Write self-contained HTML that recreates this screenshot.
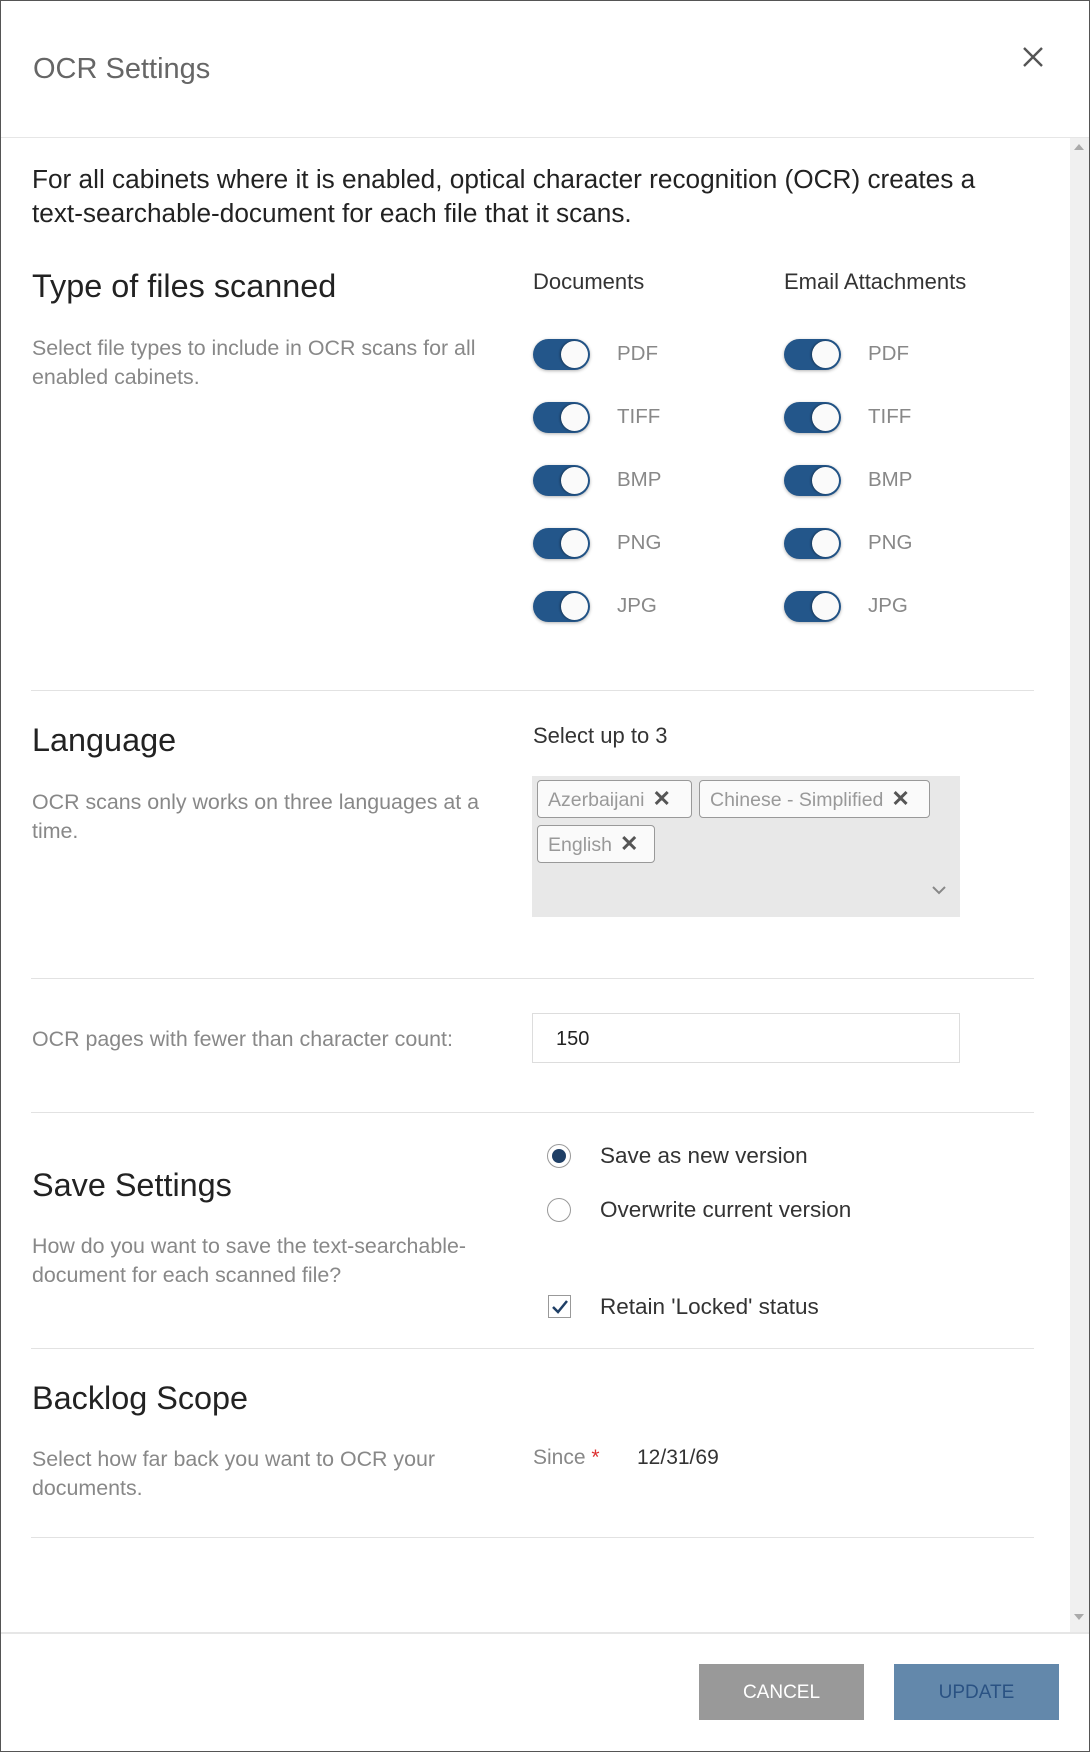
<!DOCTYPE html>
<html><head><meta charset="utf-8"><style>
*{margin:0;padding:0;box-sizing:border-box}
body{width:1090px;height:1752px;background:#fff;font-family:"Liberation Sans",sans-serif;position:relative;overflow:hidden}
.a{position:absolute;white-space:nowrap}
.frame{position:absolute;left:0;top:0;width:1090px;height:1752px;border:1px solid #555}
.sep{position:absolute;left:31px;width:1003px;height:1px;background:#e2e2e2}
.h{font-size:32.4px;color:#222}
.d{font-size:21.4px;color:#888;line-height:29px}
.col{font-size:22px;color:#333}
.tg{position:absolute;width:57px;height:31px;border-radius:16px;background:#23568a;box-shadow:0 1px 3px rgba(0,0,0,.3)}
.tg:after{content:"";position:absolute;right:2px;top:2px;width:27px;height:27px;border-radius:50%;background:#fafafa;box-shadow:-1px 0 2px rgba(0,0,0,.4)}
.tl{font-size:20.5px;color:#888}
.chip{position:absolute;height:38px;border:1px solid #999;border-radius:4px;background:#fafafa;font-size:19.5px;color:#999;line-height:36px;padding-left:10px}
.chip b{color:#555;font-size:22px;margin-left:8px}
</style></head><body>
<div class="frame"></div>
<div class="a" style="left:33px;top:53px;font-size:29px;color:#666">OCR Settings</div>
<svg class="a" style="left:1022px;top:46px" width="22" height="22"><path d="M2 2L20 20M20 2L2 20" stroke="#555" stroke-width="2.4"/></svg>
<div class="a" style="left:1px;top:137px;width:1088px;height:1px;background:#e6e6e6"></div>
<div class="a" style="left:1070px;top:138px;width:19px;height:1494px;background:#f0f0f0"></div>
<div class="a" style="left:1074px;top:144px;width:0;height:0;border:5px solid transparent;border-bottom:6px solid #aaa;border-top:0"></div>
<div class="a" style="left:1074px;top:1614px;width:0;height:0;border:5px solid transparent;border-top:6px solid #aaa;border-bottom:0"></div>

<div class="a" style="left:32px;top:162px;font-size:26.2px;color:#222;line-height:34px">For all cabinets where it is enabled, optical character recognition (OCR) creates a<br>text-searchable-document for each file that it scans.</div>

<div class="a h" style="left:32px;top:268px">Type of files scanned</div>
<div class="a d" style="left:32px;top:334px">Select file types to include in OCR scans for all<br>enabled cabinets.</div>
<div class="a col" style="left:533px;top:269px">Documents</div>
<div class="a col" style="left:784px;top:269px">Email Attachments</div>

<div class="tg" style="left:533px;top:339px"></div><div class="a tl" style="left:617px;top:342px">PDF</div>
<div class="tg" style="left:533px;top:402px"></div><div class="a tl" style="left:617px;top:405px">TIFF</div>
<div class="tg" style="left:533px;top:465px"></div><div class="a tl" style="left:617px;top:468px">BMP</div>
<div class="tg" style="left:533px;top:528px"></div><div class="a tl" style="left:617px;top:531px">PNG</div>
<div class="tg" style="left:533px;top:591px"></div><div class="a tl" style="left:617px;top:594px">JPG</div>
<div class="tg" style="left:784px;top:339px"></div><div class="a tl" style="left:868px;top:342px">PDF</div>
<div class="tg" style="left:784px;top:402px"></div><div class="a tl" style="left:868px;top:405px">TIFF</div>
<div class="tg" style="left:784px;top:465px"></div><div class="a tl" style="left:868px;top:468px">BMP</div>
<div class="tg" style="left:784px;top:528px"></div><div class="a tl" style="left:868px;top:531px">PNG</div>
<div class="tg" style="left:784px;top:591px"></div><div class="a tl" style="left:868px;top:594px">JPG</div>

<div class="sep" style="top:690px"></div>
<div class="a h" style="left:32px;top:722px">Language</div>
<div class="a col" style="left:533px;top:723px">Select up to 3</div>
<div class="a d" style="left:32px;top:788px">OCR scans only works on three languages at a<br>time.</div>
<div class="a" style="left:532px;top:776px;width:428px;height:141px;background:#e8e8e8"></div>
<div class="chip" style="left:537px;top:780px;width:155px">Azerbaijani<b>✕</b></div>
<div class="chip" style="left:699px;top:780px;width:231px">Chinese - Simplified<b>✕</b></div>
<div class="chip" style="left:537px;top:825px;width:118px">English<b>✕</b></div>
<svg class="a" style="left:931px;top:885px" width="16" height="10"><path d="M2 2L8 8L14 2" stroke="#888" stroke-width="2" fill="none"/></svg>

<div class="sep" style="top:978px"></div>
<div class="a d" style="left:32px;top:1025px">OCR pages with fewer than character count:</div>
<div class="a" style="left:532px;top:1013px;width:428px;height:50px;border:1px solid #ddd;font-size:20px;color:#222;padding:14px 0 0 23px">150</div>

<div class="sep" style="top:1112px"></div>
<div class="a" style="left:547px;top:1144px;width:24px;height:24px;border-radius:50%;border:1px solid #999"></div>
<div class="a" style="left:552px;top:1149px;width:14px;height:14px;border-radius:50%;background:#1f3f66"></div>
<div class="a col" style="left:600px;top:1143px;font-size:22.5px">Save as new version</div>
<div class="a" style="left:547px;top:1198px;width:24px;height:24px;border-radius:50%;border:1px solid #999"></div>
<div class="a col" style="left:600px;top:1197px;font-size:22.5px">Overwrite current version</div>
<div class="a h" style="left:32px;top:1167px">Save Settings</div>
<div class="a d" style="left:32px;top:1232px">How do you want to save the text-searchable-<br>document for each scanned file?</div>
<div class="a" style="left:548px;top:1295px;width:23px;height:23px;border:1px solid #999"></div>
<svg class="a" style="left:551px;top:1298px" width="18" height="18"><path d="M2 9L7 14L16 3" stroke="#1f3f66" stroke-width="2.5" fill="none"/></svg>
<div class="a col" style="left:600px;top:1294px;font-size:22.5px">Retain 'Locked' status</div>

<div class="sep" style="top:1348px"></div>
<div class="a h" style="left:32px;top:1380px">Backlog Scope</div>
<div class="a d" style="left:32px;top:1445px">Select how far back you want to OCR your<br>documents.</div>
<div class="a" style="left:533px;top:1446px;font-size:21px;color:#888">Since <span style="color:#d33">*</span></div>
<div class="a col" style="left:637px;top:1446px;font-size:21px">12/31/69</div>
<div class="sep" style="top:1537px"></div>

<div class="a" style="left:1px;top:1632px;width:1088px;height:2px;background:#e6e6e6"></div>
<div class="a" style="left:699px;top:1664px;width:165px;height:56px;background:#999;color:#fff;font-size:19px;text-align:center;line-height:58px">CANCEL</div>
<div class="a" style="left:894px;top:1664px;width:165px;height:56px;background:#6388ab;color:#2a5283;font-size:19px;text-align:center;line-height:58px">UPDATE</div>
</body></html>
